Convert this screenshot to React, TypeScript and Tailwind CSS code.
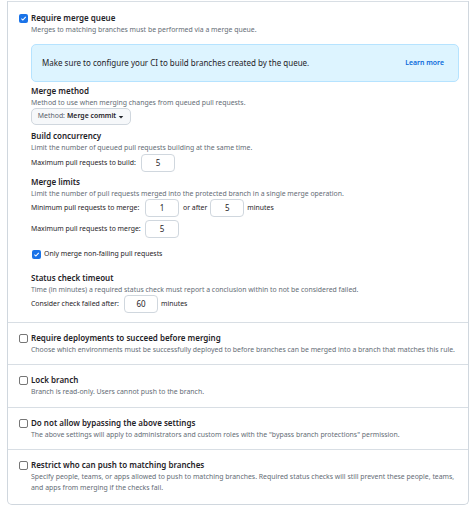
import type { ReactNode } from "react";

const FONT = "font-['Segoe_UI','Noto_Sans',sans-serif]";

function Checkbox({ checked = false }: { checked?: boolean }) {
  return checked ? (
    <span className="flex h-[9px] w-[9px] shrink-0 items-center justify-center rounded-[2px] bg-[#1a73e8]">
      <svg viewBox="0 0 10 10" className="h-[7px] w-[7px]">
        <path d="M2 5.2 L4.1 7.2 L8.2 2.8" fill="none" stroke="white" strokeWidth="1.6" />
      </svg>
    </span>
  ) : (
    <span className="block h-[9px] w-[9px] shrink-0 rounded-[2px] border border-[#767676] bg-white" />
  );
}

function NumberInput({ value }: { value: string }) {
  return (
    <span className="flex h-[18px] w-[34px] items-center justify-center rounded-[4px] border border-[#d0d7de] bg-white text-[8px] text-[#1f2328]">
      {value}
    </span>
  );
}

function Section({
  title,
  checked,
  className = "pt-[9px] pb-[9px]",
  children,
}: {
  title: string;
  checked?: boolean;
  className?: string;
  children?: ReactNode;
}) {
  return (
    <div className={`border-t border-[#d8dee4] pl-[11px] pr-[8px] ${className}`}>
      <div className="flex h-[12px] items-center gap-[3px]">
        <Checkbox checked={checked} />
        <span className="text-[8px] font-semibold text-[#1f2328]">{title}</span>
      </div>
      <div className="pl-[12px]">{children}</div>
    </div>
  );
}

function Desc({ children }: { children: ReactNode }) {
  return <p className="text-[6.9px] leading-[11px] text-[#656d76]">{children}</p>;
}

function SubTitle({ children, className = "" }: { children: ReactNode; className?: string }) {
  return (
    <p className={`h-[12px] text-[8px] font-semibold leading-[12px] text-[#1f2328] ${className}`}>{children}</p>
  );
}

export default function App() {
  return (
    <div className={`h-[506px] w-[474px] overflow-hidden bg-white ${FONT}`}>
      <div className="ml-[7px] mt-[1px] w-[462px] rounded-b-[5px] border border-t-0 border-[#d0d7de]">
        <Section title="Require merge queue" checked className="pt-[10px] pb-[9px]">
          <Desc>Merges to matching branches must be performed via a merge queue.</Desc>

          <div className="mt-[9px] mr-[1px] flex h-[38px] items-center justify-between rounded-[5px] border border-[#b6e3ff] bg-[#ddf4ff] pl-[10px] pr-[14px]">
            <span className="text-[8px] text-[#1f2328]">
              Make sure to configure your CI to build branches created by the queue.
            </span>
            <span className="text-[6.9px] font-semibold text-[#0969da]">Learn more</span>
          </div>

          <SubTitle className="mt-[3px]">Merge method</SubTitle>
          <Desc>Method to use when merging changes from queued pull requests.</Desc>
          <div className="flex h-[17px] w-[100px] items-center justify-center gap-[2px] rounded-[5px] border border-[#d0d7de] bg-[#f6f8fa] text-[6.9px] text-[#1f2328]">
            <span className="text-[#57606a]">Method:</span>
            <span className="font-semibold">Merge commit</span>
            <svg viewBox="0 0 8 8" className="h-[6px] w-[6px]">
              <path d="M1 2.5 L7 2.5 L4 6 Z" fill="#1f2328" />
            </svg>
          </div>

          <SubTitle className="mt-[5px]">Build concurrency</SubTitle>
          <Desc>Limit the number of queued pull requests building at the same time.</Desc>
          <div className="mt-[1px] flex items-center text-[6.9px] text-[#1f2328]">
            <span className="w-[110px]">Maximum pull requests to build:</span>
            <NumberInput value="5" />
          </div>

          <SubTitle className="mt-[4px]">Merge limits</SubTitle>
          <Desc>
            Limit the number of pull requests merged into the protected branch in a single merge operation.
          </Desc>
          <div className="flex items-center text-[6.9px] text-[#1f2328]">
            <span className="w-[114px]">Minimum pull requests to merge:</span>
            <NumberInput value="1" />
            <span className="ml-[4px] mr-[3px]">or after</span>
            <NumberInput value="5" />
            <span className="ml-[3px]">minutes</span>
          </div>
          <div className="mt-[3px] flex items-center text-[6.9px] text-[#1f2328]">
            <span className="w-[114px]">Maximum pull requests to merge:</span>
            <NumberInput value="5" />
          </div>

          <div className="mt-[10px] flex h-[12px] items-center gap-[3px] pl-[1px]">
            <Checkbox checked />
            <span className="text-[6.9px] text-[#1f2328]">Only merge non-failing pull requests</span>
          </div>

          <SubTitle className="mt-[12px]">Status check timeout</SubTitle>
          <Desc>
            Time (in minutes) a required status check must report a conclusion within to not be considered failed.
          </Desc>
          <div className="flex items-center text-[6.9px] text-[#1f2328]">
            <span className="w-[93px]">Consider check failed after:</span>
            <NumberInput value="60" />
            <span className="ml-[3px]">minutes</span>
          </div>
        </Section>

        <Section title="Require deployments to succeed before merging">
          <Desc>
            Choose which environments must be successfully deployed to before branches can be merged into a branch
            that matches this rule.
          </Desc>
        </Section>

        <Section title="Lock branch" className="pt-[9px] pb-[10px]">
          <Desc>Branch is read-only. Users cannot push to the branch.</Desc>
        </Section>

        <Section title="Do not allow bypassing the above settings">
          <Desc>
            The above settings will apply to administrators and custom roles with the "bypass branch protections"
            permission.
          </Desc>
        </Section>

        <Section title="Restrict who can push to matching branches" className="pt-[9px] pb-[11px]">
          <Desc>
            Specify people, teams, or apps allowed to push to matching branches. Required status checks will still
            prevent these people, teams, and apps from merging if the checks fail.
          </Desc>
        </Section>
      </div>
    </div>
  );
}
